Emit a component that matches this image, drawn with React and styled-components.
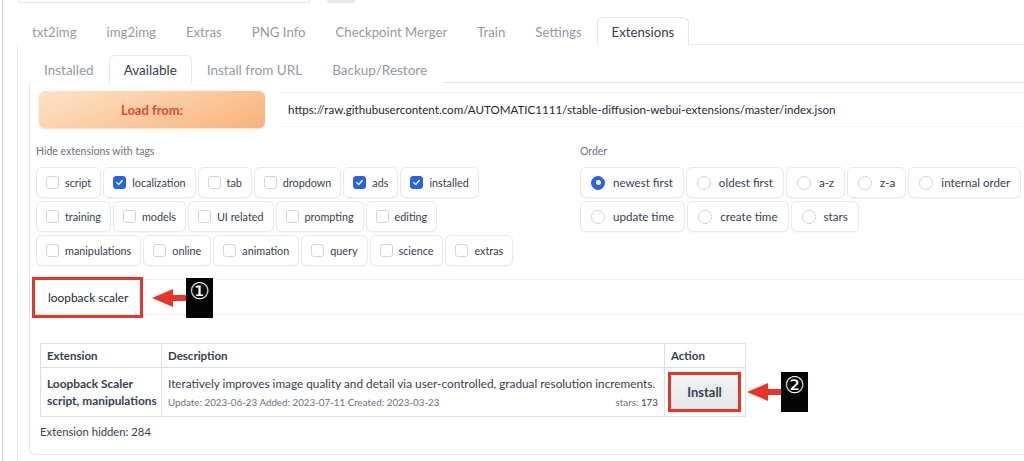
import React from "react";
import styled, { createGlobalStyle } from "styled-components";

const GlobalStyle = createGlobalStyle`
  html, body { margin: 0; padding: 0; background: #fff; overflow: hidden; }
  body { font-family: Lato, "Noto Sans", sans-serif; color: #374151; }
  * { box-sizing: border-box; }
`;

const Page = styled.div`
  width: 1100px;
  height: 461px;
  margin-left: 2px;
  border-left: 1px solid #cfd2d6;
  padding-left: 14px;
  display: flex;
  flex-direction: column;
`;

const TopStubs = styled.div`
  display: flex;
  align-items: flex-start;
  height: 3px;
`;

const StubBox = styled.div`
  width: 292px;
  height: 3px;
  margin-left: 1px;
  border: 1px solid #e5e7eb;
  border-top: none;
  border-radius: 0 0 6px 6px;
`;

const StubPill = styled.div`
  width: 28px;
  height: 3px;
  margin-left: 17px;
  background: #e5e7eb;
  border-radius: 0 0 6px 6px;
`;

const TabBar = styled.div`
  display: flex;
  margin-top: ${(p) => p.$top}px;
  border-bottom: 1px solid #e5e7eb;
`;

const Tab = styled.div`
  height: 28px;
  padding: 0 14px;
  display: flex;
  align-items: center;
  font-size: ${(p) => p.$size}px;
  color: ${(p) => (p.$active ? "#374151" : "#959ba5")};
  border: 1px solid ${(p) => (p.$active ? "#e5e7eb" : "transparent")};
  border-bottom: none;
  border-radius: 6px 6px 0 0;
  background: #fff;
  margin-bottom: -1px;
  white-space: nowrap;
`;

const OuterPanel = styled.div`
  flex: 1;
  display: flex;
  flex-direction: column;
  border-left: 1px solid #e5e7eb;
  padding: 10px 0 6px 11px;
`;

const InnerPanel = styled.div`
  flex: 1;
  border: 1px solid #e5e7eb;
  border-top: none;
  border-right: none;
  border-radius: 0 0 0 6px;
  padding: 8px 0 0 6px;
  display: flex;
  flex-direction: column;
`;

const LoadRow = styled.div`
  display: flex;
  gap: 15px;
  margin-left: 3px;
  height: 37px;
`;

const LoadButton = styled.button`
  width: 226px;
  height: 37px;
  border: none;
  border-radius: 6px;
  background: linear-gradient(160deg, #fde3c8 0%, #fbc99c 55%, #f8b27a 100%);
  box-shadow: 0 1px 2px rgba(200, 120, 40, 0.25);
  color: #e8473a;
  font-family: Lato, sans-serif;
  font-weight: 700;
  font-size: 13px;
`;

const UrlInput = styled.div`
  flex: 1;
  height: 35px;
  margin-top: 1px;
  border-top: 1px solid #eef0f3;
  border-bottom: 1px solid #f6f7f9;
  padding-left: 8px;
  display: flex;
  align-items: center;
  font-size: 11.6px;
  color: #1f2937;
`;

const Filters = styled.div`
  display: flex;
  margin-top: 16px;
`;

const FilterColumn = styled.div`
  width: ${(p) => (p.$width ? `${p.$width}px` : "auto")};
  flex: ${(p) => (p.$width ? "none" : 1)};
`;

const GroupLabel = styled.div`
  font-size: 10.5px;
  line-height: 14px;
  color: #6b7280;
  margin-bottom: 9px;
`;

const ChipRows = styled.div`
  display: flex;
  flex-direction: column;
  gap: 3px;
`;

const ChipRow = styled.div`
  display: flex;
  gap: 2px;
`;

const Chip = styled.div`
  height: 31px;
  display: inline-flex;
  align-items: center;
  gap: ${(p) => (p.$radio ? 8 : 6)}px;
  padding: 0 ${(p) => (p.$radio ? 10 : 9)}px;
  border: 1px solid #e7e9ed;
  border-radius: 6px;
  background: #fff;
  box-shadow: 0 1px 2px rgba(0, 0, 0, 0.04);
  font-size: ${(p) => (p.$radio ? 11.6 : 10.8)}px;
  color: #374151;
  white-space: nowrap;
`;

const Box = styled.span`
  width: 13px;
  height: 13px;
  border-radius: 3px;
  border: 1px solid ${(p) => (p.$on ? "#2563eb" : "#d1d5db")};
  background: ${(p) => (p.$on ? "#2563eb" : "#fff")};
  display: inline-flex;
  align-items: center;
  justify-content: center;
  flex: none;
`;

const Dot = styled.span`
  width: 14px;
  height: 14px;
  border-radius: 50%;
  border: 1px solid ${(p) => (p.$on ? "#2563eb" : "#d1d5db")};
  background: ${(p) => (p.$on ? "#2563eb" : "#fff")};
  display: inline-flex;
  align-items: center;
  justify-content: center;
  flex: none;
  &::after {
    content: "";
    width: 5px;
    height: 5px;
    border-radius: 50%;
    background: ${(p) => (p.$on ? "#fff" : "transparent")};
  }
`;

const SearchField = styled.div`
  position: relative;
  margin-top: 13px;
  height: 36px;
  border-top: 1px solid #eef0f4;
  border-bottom: 1px solid #eef0f4;
  padding-left: 12px;
  display: flex;
  align-items: center;
  font-size: 11.9px;
  color: #1f2937;
`;

const RedFrame = styled.div`
  position: absolute;
  left: ${(p) => p.$left}px;
  top: ${(p) => p.$top}px;
  width: ${(p) => p.$w}px;
  height: ${(p) => p.$h}px;
  border: 3px solid #e8352a;
  pointer-events: none;
`;

const Callout = styled.div`
  position: absolute;
  left: ${(p) => p.$left}px;
  top: ${(p) => p.$top}px;
  height: 40px;
  display: flex;
  align-items: center;
`;

const Badge = styled.div`
  width: 27px;
  height: 40px;
  background: #050505;
  color: #fff;
  display: flex;
  justify-content: center;
  align-items: flex-start;
  padding-top: 2px;
  font-family: "DejaVu Sans", "Noto Sans CJK JP", sans-serif;
  font-size: 23px;
  line-height: 1;
`;

const TableWrap = styled.div`
  position: relative;
  margin: 28px 0 0 4px;
  width: 705px;
`;

const Table = styled.table`
  border-collapse: collapse;
  width: 705px;
  table-layout: fixed;
  border: 1px solid #dcdfe3;
`;

const Th = styled.th`
  height: 24px;
  padding: 0 6px;
  text-align: left;
  font-size: 11.5px;
  font-weight: 700;
  color: #374151;
  border: 1px solid #dcdfe3;
`;

const Td = styled.td`
  height: 49px;
  padding: ${(p) => p.$pad || "0 6px"};
  border: 1px solid #dcdfe3;
  vertical-align: middle;
`;

const NameLine = styled.div`
  font-size: 11.9px;
  font-weight: 700;
  line-height: 17px;
  color: #374151;
  white-space: nowrap;
`;

const Desc = styled.div`
  font-size: 11.8px;
  line-height: 16px;
  color: #374151;
  white-space: nowrap;
`;

const Meta = styled.div`
  display: flex;
  justify-content: space-between;
  font-size: 9.8px;
  line-height: 14px;
  margin-top: 3px;
  color: #6b7280;
  white-space: nowrap;
  b { font-weight: 400; color: #374151; }
`;

const InstallButton = styled.button`
  width: 73px;
  height: 40px;
  border: 3px solid #e8352a;
  background: linear-gradient(180deg, #f3f4f6, #e5e7eb);
  font-family: Lato, sans-serif;
  font-weight: 700;
  font-size: 13px;
  color: #374151;
  display: block;
`;

const Hidden = styled.div`
  margin: 8px 0 0 4px;
  font-size: 11.3px;
  color: #374151;
`;

const Arrow = () => (
  <svg width="34" height="20" viewBox="0 0 34 20">
    <polygon points="0,10 21,1 21,19" fill="#e8352a" />
    <rect x="20" y="7" width="14" height="6" fill="#e8352a" />
  </svg>
);

const Check = () => (
  <svg width="9" height="9" viewBox="0 0 10 10">
    <path d="M2 5.2 L4.2 7.3 L8 2.8" fill="none" stroke="#fff" strokeWidth="1.6" strokeLinecap="round" strokeLinejoin="round" />
  </svg>
);

const mainTabs = ["txt2img", "img2img", "Extras", "PNG Info", "Checkpoint Merger", "Train", "Settings", "Extensions"];
const subTabs = ["Installed", "Available", "Install from URL", "Backup/Restore"];

const tagRows = [
  [["script"], ["localization", true], ["tab"], ["dropdown"], ["ads", true], ["installed", true]],
  [["training"], ["models"], ["UI related"], ["prompting"], ["editing"]],
  [["manipulations"], ["online"], ["animation"], ["query"], ["science"], ["extras"]],
];

const orderRows = [
  [["newest first", true], ["oldest first"], ["a-z"], ["z-a"], ["internal order"]],
  [["update time"], ["create time"], ["stars"]],
];

export default function App() {
  return (
    <>
      <GlobalStyle />
      <Page>
        <TopStubs>
          <StubBox />
          <StubPill />
        </TopStubs>
        <TabBar $top={14}>
          {mainTabs.map((t) => (
            <Tab key={t} $size={13.2} $active={t === "Extensions"}>{t}</Tab>
          ))}
        </TabBar>
        <OuterPanel>
          <TabBar $top={0}>
            {subTabs.map((t) => (
              <Tab key={t} $size={13.5} $active={t === "Available"}>{t}</Tab>
            ))}
          </TabBar>
          <InnerPanel>
            <LoadRow>
              <LoadButton>Load from:</LoadButton>
              <UrlInput>https://raw.githubusercontent.com/AUTOMATIC1111/stable-diffusion-webui-extensions/master/index.json</UrlInput>
            </LoadRow>
            <Filters>
              <FilterColumn $width={544}>
                <GroupLabel>Hide extensions with tags</GroupLabel>
                <ChipRows>
                  {tagRows.map((row, i) => (
                    <ChipRow key={i}>
                      {row.map(([label, on]) => (
                        <Chip key={label}>
                          <Box $on={on}>{on && <Check />}</Box>
                          {label}
                        </Chip>
                      ))}
                    </ChipRow>
                  ))}
                </ChipRows>
              </FilterColumn>
              <FilterColumn>
                <GroupLabel>Order</GroupLabel>
                <ChipRows>
                  {orderRows.map((row, i) => (
                    <ChipRow key={i}>
                      {row.map(([label, on]) => (
                        <Chip key={label} $radio>
                          <Dot $on={on} />
                          {label}
                        </Chip>
                      ))}
                    </ChipRow>
                  ))}
                </ChipRows>
              </FilterColumn>
            </Filters>
            <SearchField>
              loopback scaler
              <RedFrame $left={-4} $top={-3} $w={111} $h={41} />
              <Callout $left={116} $top={-2}>
                <Arrow />
                <Badge>①</Badge>
              </Callout>
            </SearchField>
            <TableWrap>
              <Table>
                <colgroup>
                  <col style={{ width: 121 }} />
                  <col style={{ width: 503 }} />
                  <col style={{ width: 81 }} />
                </colgroup>
                <thead>
                  <tr>
                    <Th>Extension</Th>
                    <Th>Description</Th>
                    <Th>Action</Th>
                  </tr>
                </thead>
                <tbody>
                  <tr>
                    <Td>
                      <NameLine>Loopback Scaler</NameLine>
                      <NameLine>script, manipulations</NameLine>
                    </Td>
                    <Td>
                      <Desc>Iteratively improves image quality and detail via user-controlled, gradual resolution increments.</Desc>
                      <Meta>
                        <span>Update: 2023-06-23 Added: 2023-07-11 Created: 2023-03-23</span>
                        <span>stars: <b>173</b></span>
                      </Meta>
                    </Td>
                    <Td $pad="0 3px">
                      <InstallButton>Install</InstallButton>
                    </Td>
                  </tr>
                </tbody>
              </Table>
              <Callout $left={707} $top={29}>
                <Arrow />
                <Badge>②</Badge>
              </Callout>
            </TableWrap>
            <Hidden>Extension hidden: 284</Hidden>
          </InnerPanel>
        </OuterPanel>
      </Page>
    </>
  );
}
